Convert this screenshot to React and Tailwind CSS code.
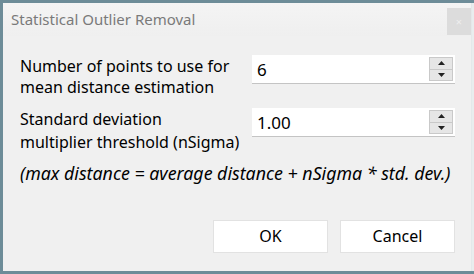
import React from "react";

const Spinner = () => (
  <div className="flex flex-col w-[24px] h-[24px] border border-[#c9c9c9] bg-[#e6e6e6]">
    <div className="flex-1 flex items-center justify-center border-b border-[#c9c9c9]">
      <svg width="7" height="4" viewBox="0 0 7 4"><path d="M0 4 L3.5 0 L7 4 Z" fill="#222" /></svg>
    </div>
    <div className="flex-1 flex items-center justify-center">
      <svg width="7" height="4" viewBox="0 0 7 4"><path d="M0 0 L3.5 4 L7 0 Z" fill="#222" /></svg>
    </div>
  </div>
);

const NumberField = ({ value }) => (
  <div className="w-[203px] h-[29px] bg-white border-b border-[#c4c4c4] flex items-center justify-between pl-[5px] pr-[2px]">
    <span className="text-[17px] text-black leading-none">{value}</span>
    <Spinner />
  </div>
);

export default function App() {
  return (
    <div
      className="w-[474px] h-[274px] bg-[#6d8c98] pt-[3px] pl-[3px] overflow-hidden"
      style={{ fontFamily: '"Noto Sans", "Open Sans", sans-serif' }}
    >
      <div className="w-[468px] h-[268px] bg-[#f0f0f0] flex flex-col shadow-[1px_0_0_#e4e8ea,3px_0_0_#e9edee]">
        <div className="h-[33px] flex items-start justify-between bg-gradient-to-b from-[#f4f4f4] to-[#efefef]">
          <span className="pl-[8px] pt-[9px] text-[15px] text-[#7a7a7a] leading-none">Statistical Outlier Removal</span>
          <div className="mt-[5px] w-[24px] h-[27px] bg-[#dcdcdc] flex items-center justify-center">
            <span className="text-[11px] text-[#eeeeee] leading-none">×</span>
          </div>
        </div>

        <div className="pl-[17px] pr-[16px] flex flex-col">
          <div className="flex items-start mt-[19px]">
            <div className="w-[232px] text-[16px] leading-[21px] text-black mt-[1px]">
              <div>Number of points to use for</div>
              <div>mean distance estimation</div>
            </div>
            <NumberField value="6" />
          </div>

          <div className="flex items-start mt-[10px]">
            <div className="w-[232px] text-[16px] leading-[23px] text-black">
              <div>Standard deviation</div>
              <div>multiplier threshold (nSigma)</div>
            </div>
            <NumberField value="1.00" />
          </div>

          <div className="mt-[11px] text-[17.8px] italic text-black leading-none">
            (max distance = average distance + nSigma * std. dev.)
          </div>

          <div className="flex justify-end gap-[12px] mt-[37px]">
            <button className="w-[115px] h-[33px] bg-white border border-[#e2e2e2] text-[16px] text-black">OK</button>
            <button className="w-[115px] h-[33px] bg-white border border-[#e2e2e2] text-[16px] text-black">Cancel</button>
          </div>
        </div>
      </div>
    </div>
  );
}
